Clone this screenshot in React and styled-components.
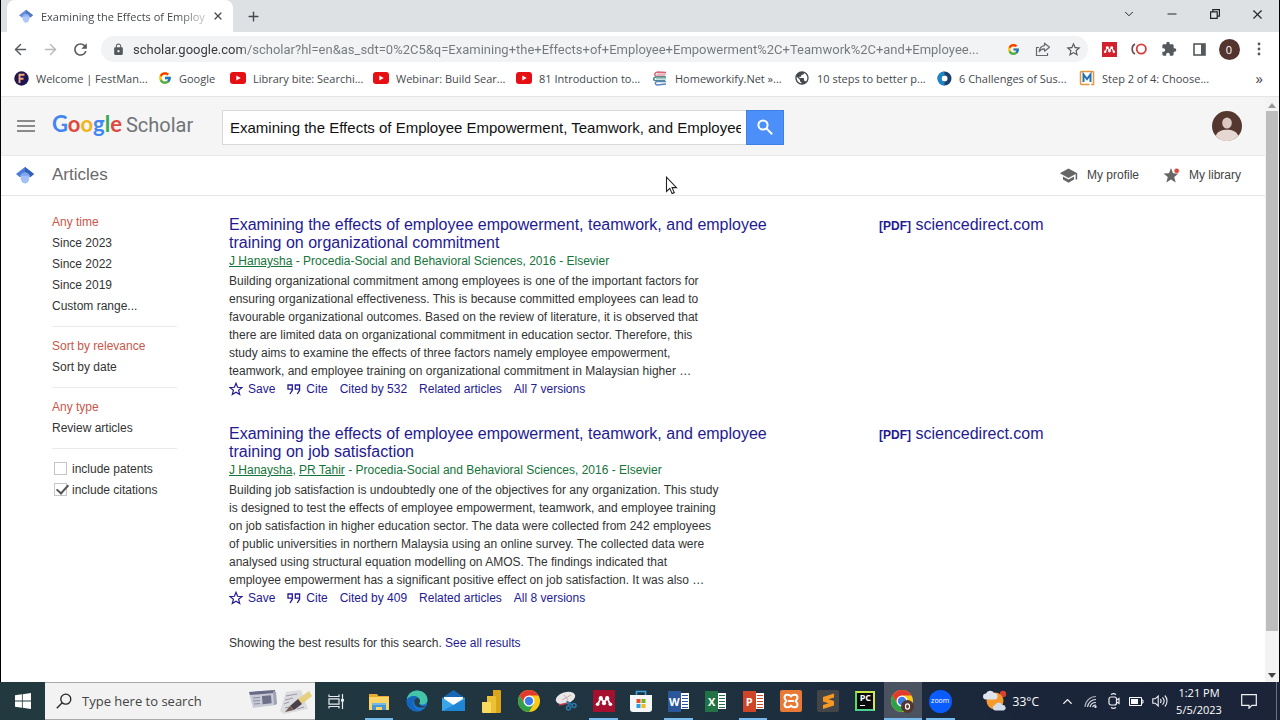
import React from "react";
import styled, { createGlobalStyle } from "styled-components";
import { FcGoogle } from "react-icons/fc";
import { MdLock, MdRefresh, MdExtension, MdStarBorder, MdSchool, MdPublic } from "react-icons/md";
import { ArrowLeft, ArrowRight, Plus, X, ChevronDown, ChevronUp, Minus } from "lucide-react";

const ui = '"Open Sans", "Noto Sans", sans-serif';
const arial = '"Liberation Sans", Arial, sans-serif';
const LINK = "#241a92";
const GREEN = "#14743a";

const GlobalStyle = createGlobalStyle`
  * { box-sizing: border-box; }
  body { margin: 0; background: #fff; }
  button, input { font: inherit; color: inherit; margin: 0; }
  button { border: 0; padding: 0; background: none; display: inline-flex; align-items: center; justify-content: center; }
  a { color: inherit; text-decoration: none; }
  svg { display: block; flex: none; }
`;

const Desktop = styled.div`
  min-height: 100vh;
  display: flex;
  flex-direction: column;
  font-family: ${arial};
  background: #fff;
`;

const Browser = styled.div`
  flex: 1;
  display: flex;
  flex-direction: column;
  border-left: 1px solid #000;
  border-right: 1px solid #000;
`;

/* Tab strip */

const TabStrip = styled.div`
  height: 32px;
  display: flex;
  align-items: center;
  padding-left: 6px;
  background: #dde1e4;
  font-family: ${ui};
  font-size: 11px;
  color: #45494d;
`;

const Tab = styled.div`
  width: 226px;
  height: 32px;
  display: flex;
  align-items: center;
  padding: 0 9px 0 12px;
  background: #fff;
  border-radius: 8px 8px 0 0;
`;

const TabTitle = styled.span`
  flex: 1;
  margin-left: 8px;
  white-space: nowrap;
  mask-image: linear-gradient(90deg, #000 80%, rgba(0, 0, 0, 0.35) 94%);
`;

const NewTab = styled.button`
  width: 28px;
  height: 28px;
  margin-left: 6px;
`;

const WindowButtons = styled.div`
  margin-left: auto;
  display: flex;
  padding-bottom: 4px;
  color: #222;
`;

const WindowButton = styled.button`
  width: 43px;
  height: 28px;
`;

/* Toolbar */

const Toolbar = styled.div`
  height: 34px;
  display: flex;
  align-items: center;
  padding: 0 5px 0 4px;
  color: #55595d;
  font-family: ${ui};
`;

const ToolButton = styled.button`
  width: 30px;
  height: 28px;
  color: ${(p) => (p.$dim ? "#b6b9bc" : "inherit")};
`;

const Omnibox = styled.label`
  flex: 1;
  min-width: 0;
  height: 26px;
  margin: 0 6px 0 6px;
  display: flex;
  align-items: center;
  padding-left: 11px;
  border-radius: 13px;
  background: #f1f3f4;
  font-family: Roboto, sans-serif;
  font-size: 13px;
`;

const UrlInput = styled.input`
  flex: 1;
  min-width: 0;
  height: 24px;
  border: 0;
  padding: 0;
  margin-left: 8px;
  outline: 0;
  background: linear-gradient(90deg, #34373a 109px, #74787c 109px);
  background-clip: text;
  -webkit-background-clip: text;
  -webkit-text-fill-color: transparent;
`;

const ProfileBadge = styled.span`
  width: 21px;
  height: 21px;
  border-radius: 50%;
  background: #54342f;
  color: #fff;
  font-size: 11px;
  line-height: 21px;
  text-align: center;
`;

const Bookmarks = styled.nav`
  height: 31px;
  display: flex;
  align-items: center;
  padding: 0 16px 6px 13px;
  border-bottom: 1px solid #e4e4e4;
  font-family: ${ui};
  font-size: 11px;
  color: #45494d;
`;

const Bookmark = styled.a`
  flex: 0 1 ${(p) => p.$width}px;
  min-width: 0;
  display: flex;
  align-items: center;
  gap: 7px;
  white-space: nowrap;
`;

const More = styled.button`
  margin-left: auto;
  font-size: 15px;
  line-height: 18px;
`;

/* Page */

const Viewport = styled.div`
  flex: 1;
  display: flex;
`;

const Page = styled.div`
  flex: 1;
  min-width: 0;
`;

const ScholarHeader = styled.header`
  height: 59px;
  display: flex;
  align-items: center;
  padding: 0 23px 0 15px;
  background: #f5f5f5;
  border-bottom: 1px solid #e8e8e8;
`;

const MenuButton = styled.button`
  width: 20px;
  height: 20px;
  color: #666;
`;

const Logo = styled.a`
  width: 170px;
  margin-left: 16px;
  margin-bottom: 3px;
  display: flex;
  align-items: baseline;
  gap: 4px;
  font-family: Lato, sans-serif;
  font-size: 22px;
  line-height: 28px;
`;

const Letter = styled.span`
  color: ${(p) => p.$color};
  font-weight: 700;
`;

const LogoWord = styled.span`
  font-family: Roboto, sans-serif;
  font-size: 20px;
  color: #707478;
`;

const SearchForm = styled.form`
  flex: 0 1 562px;
  min-width: 0;
  height: 35px;
  margin-top: 2px;
  display: flex;
`;

const SearchInput = styled.input`
  flex: 1;
  min-width: 0;
  border: 1px solid #d9d9d9;
  border-right: 0;
  padding: 1px 5px 0 7px;
  background: #fff;
  color: #111;
  font-size: 15px;
  outline: 0;
`;

const SearchButton = styled.button`
  width: 38px;
  background: #4d8ff8;
  border: 1px solid #3f7fe8;
`;

const Avatar = styled.button`
  margin-left: auto;
`;

const SubBar = styled.div`
  height: 40px;
  display: flex;
  align-items: center;
  padding: 0 24px 1px 15px;
  border-bottom: 1px solid #e5e5e5;
  color: #444;
  font-size: 12px;
`;

const SectionTitle = styled.h1`
  flex: 1;
  margin: 0 0 0 18px;
  font-size: 17px;
  line-height: 22px;
  font-weight: 400;
  color: #6a6a6a;
`;

const SubLink = styled.a`
  display: flex;
  align-items: center;
  gap: 9px;
  margin-left: 24px;
`;

const Content = styled.div`
  display: flex;
  padding: 16px 16px 24px 51px;
`;

const Sidebar = styled.aside`
  width: 125px;
  margin-right: 52px;
  font-size: 12px;
  color: #333;
`;

const FilterGroup = styled.div`
  display: flex;
  flex-direction: column;
  & + & {
    margin-top: 9px;
    padding-top: 9px;
    border-top: 1px solid #ebebeb;
  }
`;

const Filter = styled.a`
  line-height: 21px;
  color: ${(p) => (p.$active ? "#c9564a" : "inherit")};
`;

const CheckRow = styled.label`
  height: 21px;
  display: flex;
  align-items: center;
  gap: 5px;
  padding-left: 2px;
  white-space: nowrap;
`;

const Checkbox = styled.input`
  appearance: none;
  position: relative;
  width: 13px;
  height: 13px;
  border: 1px solid #c6c6c6;
  background: #fff;
  &:checked::after {
    content: "";
    position: absolute;
    left: 4px;
    top: -2px;
    width: 5px;
    height: 10px;
    border: solid #555;
    border-width: 0 2px 2px 0;
    transform: rotate(42deg);
  }
`;

const Results = styled.main`
  flex: 1;
  min-width: 0;
  padding-top: 4px;
  font-size: 12px;
  line-height: 18px;
  color: #333;
`;

const Result = styled.article`
  display: grid;
  grid-template-columns: minmax(0, 650px) auto;
  justify-content: start;
  margin-bottom: 27px;
`;

const ResultTitle = styled.h2`
  margin: 0;
  font-size: 16px;
  line-height: 18px;
  font-weight: 400;
  color: ${LINK};
`;

const Byline = styled.div`
  margin-bottom: 2px;
  color: ${GREEN};
`;

const Author = styled.a`
  text-decoration: underline;
`;

const Snippet = styled.div`
  white-space: nowrap;
`;

const Actions = styled.div`
  display: flex;
  gap: 12px;
  color: ${LINK};
`;

const Action = styled.a`
  display: flex;
  align-items: center;
  gap: 5px;
`;

const PdfLink = styled.a`
  font-size: 16px;
  color: ${LINK};
`;

const PdfTag = styled.b`
  font-size: 12px;
`;

const Note = styled.p`
  margin: 0;
`;

const NoteLink = styled.a`
  color: ${LINK};
`;

const Scrollbar = styled.div`
  width: 14px;
  display: flex;
  flex-direction: column;
  align-items: center;
  padding: 6px 0 4px;
  background: #f3f3f3;
`;

const Thumb = styled.div`
  flex: 1;
  width: 12px;
  margin: 3px 0 42px;
  background: #bdbdbd;
`;

const Pointer = styled.svg`
  position: absolute;
  left: 665px;
  top: 176px;
`;

/* Taskbar */

const Taskbar = styled.footer`
  height: 38px;
  display: flex;
  align-items: stretch;
  background: linear-gradient(90deg, #22393f, #1f3440 50%, #1a253a 80%, #1b2438);
  color: #fff;
  font-family: ${ui};
  font-size: 12px;
`;

const StartButton = styled.button`
  width: 45px;
`;

const TaskSearch = styled.label`
  width: 270px;
  display: flex;
  align-items: center;
  padding: 0 3px 0 11px;
  background: #f2f2f2;
  border: solid #aaa;
  border-width: 1px 0;
  color: #222;
`;

const TaskInput = styled.input`
  flex: 1;
  min-width: 0;
  margin-left: 10px;
  border: 0;
  padding: 0;
  background: none;
  font-size: 13px;
  outline: 0;
  &::placeholder { color: #444; opacity: 1; }
`;

const Apps = styled.div`
  flex: 0 1 641px;
  margin-left: 3px;
  display: flex;
`;

const AppButton = styled.button`
  flex: 1;
  border: solid transparent;
  border-width: 2px 0;
  background: ${(p) => (p.$active ? "#4b5360" : "none")};
  border-image: ${(p) =>
    p.$active
      ? "linear-gradient(90deg, #76b9ed, #76b9ed) 0 0 2 0"
      : p.$running
      ? "linear-gradient(90deg, transparent 12%, #76b9ed 12%, #76b9ed 88%, transparent 88%) 0 0 2 0"
      : "none"};
  &:first-child {
    margin-right: 5px;
  }
`;

const Tray = styled.div`
  margin-left: auto;
  display: flex;
  align-items: center;
`;

const Weather = styled.button`
  gap: 6px;
  margin-right: 17px;
`;

const TrayButton = styled.button`
  width: ${(p) => p.$width || 23}px;
  height: 30px;
`;

const Clock = styled.time`
  width: 46px;
  margin-left: 5px;
  font-size: 11px;
  line-height: 17px;
  text-align: center;
  white-space: nowrap;
`;

const ShowDesktop = styled.div`
  align-self: stretch;
  width: 4px;
  border-left: 1px solid #6b7480;
`;

/* Icons */

const ScholarIcon = ({ size = 18, soft }) => (
  <svg width={size} height={size} viewBox="0 0 18 18" aria-hidden="true" opacity={soft ? 0.85 : 1}>
    <path d="M9 1 0 8l3.600 3h10.800L18 8z" fill="#4b7bd8" />
    <path d="M9 1 18 8l-3.600 3L9 7z" fill="#3560b8" />
    <path d="M4.600 9.600c1-2 2.600-3 4.400-3s3.400 1 4.400 3c.5 3.500-1.100 8-4.400 8s-4.900-4.500-4.400-8z" fill="#a3bff6" />
    <path d="M4.200 9.700c1.200-2.400 2.800-3.200 4.800-3.200s3.600.8 4.800 3.200z" fill="#7ea4ee" />
  </svg>
);

const FestIcon = () => (
  <svg width="15" height="15" viewBox="0 0 15 15" aria-hidden="true">
    <circle cx="7.500" cy="7.500" r="7.200" fill="#1f1650" />
    <path d="M5.500 12V3.800h5M5.500 7.700h4" stroke="#f3a77d" strokeWidth="1.900" fill="none" />
  </svg>
);

const YouTubeIcon = () => (
  <svg width="16" height="12" viewBox="0 0 16 12" aria-hidden="true">
    <rect width="16" height="12" rx="3" fill="#e60f14" />
    <path d="M6.300 3.400v5.200L10.700 6z" fill="#fff" />
  </svg>
);

const BooksIcon = () => (
  <svg width="16" height="15" viewBox="0 0 16 15" fill="none" strokeWidth="1.500" aria-hidden="true">
    <path d="M14 1.500 6 1C2 1.500 2 4.500 4 5l9 .3" stroke="#d9657c" />
    <path d="M5 3.300 14 3" stroke="#e8a4b1" />
    <path d="M14 6 4 6C1 6.500 1 9 3 9.500l10 .2" stroke="#4a8c86" />
    <path d="M4 7.800h10" stroke="#9cc9c3" />
    <path d="M14 10.500 5 10.500c-2.500.5-2 3 0 3.500l9-1" stroke="#5a83c0" />
  </svg>
);

const RingIcon = () => (
  <svg width="15" height="15" viewBox="0 0 15 15" fill="none" strokeWidth="4" aria-hidden="true">
    <circle cx="7.500" cy="7.500" r="5" stroke="#1c3f6e" />
    <path d="M7.500 12.500a5 5 0 0 1 0-10" stroke="#1b86c8" />
  </svg>
);

const MIcon = () => (
  <svg width="16" height="16" viewBox="0 0 16 16" fill="none" aria-hidden="true">
    <path d="M4 1.500H2.500a1 1 0 0 0-1 1v11a1 1 0 0 0 1 1h8M12 14.500h2.500v-12a1 1 0 0 0-1-1H4" stroke="#e8953c" strokeWidth="1.500" />
    <path d="M4.500 12V4.500L8 9l3.500-4.500V12" stroke="#2272b4" strokeWidth="2" />
  </svg>
);

const ShareIcon = () => (
  <svg width="16" height="15" viewBox="0 0 16 15" fill="none" stroke="#666a6e" strokeWidth="1.200" aria-hidden="true">
    <path d="M4 5.500H1.500v8h11V11" />
    <path d="M9.500 1.200 14.500 5.200 9.500 9.200V6.800C7 6.700 5.200 7.600 4.200 9.800 4.400 6.500 6 4 9.500 3.600z" strokeLinejoin="round" />
  </svg>
);

const Mendeley = ({ size, bg }) => (
  <svg width={size} height={size} viewBox="0 0 22 22" aria-hidden="true">
    <rect width="22" height="22" fill={bg} />
    <path d="M4.500 14.200C6.500 13 6 10 7.800 8.300L11 12l3.200-3.700C16 10 15.500 13 17.500 14.200" stroke="#fff" strokeWidth="1.800" fill="none" />
    <circle cx="11" cy="13.200" r="2.100" fill="#fff" />
    <circle cx="4.600" cy="14.300" r="1.800" fill="#fff" />
    <circle cx="17.400" cy="14.300" r="1.800" fill="#fff" />
    <circle cx="7.800" cy="8.200" r="2.100" fill="#fff" />
    <circle cx="14.200" cy="8.200" r="2.100" fill="#fff" />
  </svg>
);

const CoIcon = () => (
  <svg width="16" height="12" viewBox="0 0 16 12" fill="none" strokeWidth="1.600" aria-hidden="true">
    <path d="M4 1C.2 3 .2 9 4 11" stroke="#6f4a4a" />
    <circle cx="10.300" cy="6" r="4.600" stroke="#d6403c" strokeWidth="1.800" />
  </svg>
);

const PanelIcon = () => (
  <svg width="13" height="13" viewBox="0 0 13 13" aria-hidden="true">
    <rect x="1" y="1" width="11" height="11" fill="none" stroke="#55595d" strokeWidth="1.600" />
    <path d="M8 1h4v11H8z" fill="#55595d" />
  </svg>
);

const DotsIcon = () => (
  <svg width="4" height="14" viewBox="0 0 4 14" fill="#55595d" aria-hidden="true">
    <circle cx="2" cy="2" r="1.400" /><circle cx="2" cy="7" r="1.400" /><circle cx="2" cy="12" r="1.400" />
  </svg>
);

const RestoreIcon = () => (
  <svg width="10" height="10" viewBox="0 0 10 10" fill="none" stroke="#222" strokeWidth="1.200" aria-hidden="true">
    <path d="M.6 2.800h6.600v6.600H.6zM2.800 2.600V.6h6.600v6.600h-2" />
  </svg>
);

const BurgerIcon = () => (
  <svg width="18" height="12" viewBox="0 0 18 12" stroke="#686868" strokeWidth="1.600" aria-hidden="true">
    <path d="M0 1h18M0 6h18M0 11h18" />
  </svg>
);

const LensIcon = ({ size, color, flip, stroke = 2 }) => (
  <svg width={size} height={size} viewBox="0 0 16 16" fill="none" stroke={color} strokeWidth={stroke} aria-hidden="true">
    {flip ? (
      <><circle cx="9.800" cy="6.200" r="5" /><path d="M6.200 9.800.8 15.200" /></>
    ) : (
      <><circle cx="6" cy="6" r="4.600" /><path d="m9.400 9.400 5.800 5.800" /></>
    )}
  </svg>
);

const AvatarIcon = () => (
  <svg width="30" height="30" viewBox="0 0 30 30" aria-hidden="true">
    <circle cx="15" cy="15" r="15" fill="#54382f" />
    <path d="M3.800 25C5 20.500 10 18.800 15 18.800s10 1.700 11.200 6.200A15 15 0 0 1 3.800 25z" fill="#e6d7d2" />
    <ellipse cx="15" cy="12" rx="4.800" ry="5.600" fill="#dcc8c2" />
  </svg>
);

const LibraryStar = () => (
  <svg width="17" height="16" viewBox="0 0 17 16" aria-hidden="true">
    <path d="m8 1 2 5.200 5.500.3-4.300 3.500L12.700 15.500 8 12.400 3.300 15.500 4.800 10 .5 6.500 6 6.200z" fill="#666" />
    <circle cx="13.700" cy="3.800" r="2.600" fill="#d9473c" stroke="#fff" strokeWidth=".5" />
  </svg>
);

const StarIcon = () => (
  <svg width="14" height="14" viewBox="0 0 14 14" fill="none" stroke={LINK} strokeWidth="1.200" aria-hidden="true">
    <path d="m7 1.300 1.600 4 4.300.3-3.300 2.700 1.100 4.200L7 10.200l-3.700 2.300 1.100-4.200L1.100 5.600l4.300-.3z" />
  </svg>
);

const QuoteIcon = () => (
  <svg width="14" height="11" viewBox="0 0 14 11" fill="none" stroke={LINK} strokeWidth="1.300" aria-hidden="true">
    <path d="M5.300 5.200H1V1h4.300v5.200L3 10M12.600 5.200H8.300V1h4.300v5.200L10.300 10" />
  </svg>
);

const WindowsIcon = () => (
  <svg width="16" height="16" viewBox="0 0 16 16" fill="#fff" aria-hidden="true">
    <path d="M0 2.300 6.900 1.300v6.300H0zM7.700 1.200 16 0v7.600H7.700zM0 8.400h6.900v6.300L0 13.700zM7.700 8.400H16V16l-8.300-1.200z" />
  </svg>
);

const NewsArt = () => (
  <svg width="63" height="28" viewBox="0 0 63 28" aria-hidden="true">
    <path d="m0 5 26-2 1 15-23 3z" fill="#c8cad6" />
    <path d="m0 5 26-2v3L1 8z" fill="#696b86" />
    <path d="m13 9 9-.7.600 8-9 1z" fill="#6d7088" />
    <path d="m4 11 7-.5M4 14l7-.5M5 17l6-.5" stroke="#8a8ca0" />
    <path d="m24 4 3 1 1 12-3 1z" fill="#9fa1b4" />
    <path d="m37 5 15-2 7 19-24 5-4-3z" fill="#dcdce0" />
    <path d="m37 9 11-2M36 13l8-2M35 17l5-2M36 21l4-1M48 22l7-2" stroke="#9a9aa6" />
    <path d="M49 12 60 4l3 5-10 8z" fill="#e6cf7f" />
    <path d="m41 19 8-7 4 5-8 6z" fill="#4a4148" />
    <path d="m36 25 5-6 4 4z" fill="#6e5a50" />
  </svg>
);

const TaskViewIcon = () => (
  <svg width="17" height="15" viewBox="0 0 17 15" fill="none" stroke="#e8ecee" strokeWidth="1.200" aria-hidden="true">
    <path d="M1 .5V2.500h10V.5M1 14.500v-2h10v2M1 4.800h10v5.400H1zM14.500 0v15" />
    <path d="M13 5h3v2.500h-3z" fill="#e8ecee" stroke="none" />
  </svg>
);

const ExplorerIcon = () => (
  <svg width="22" height="19" viewBox="0 0 22 19" aria-hidden="true">
    <path d="M1 2h8l1.500 2H21v14H1z" fill="#e9a936" />
    <path d="M1 5h20v13H1z" fill="#fad565" />
    <path d="M4 18v-7h14v7h-4v-3H8v3z" fill="#4597d8" />
    <path d="M4 11h14v2H4z" fill="#73b8e8" />
  </svg>
);

const EdgeIcon = () => (
  <svg width="22" height="22" viewBox="0 0 22 22" aria-hidden="true">
    <circle cx="11" cy="11" r="10.500" fill="#1b77d2" />
    <path d="M.8 10C1.500 4 6 .5 11 .5c6 0 10.500 4.300 10.500 9 0 3.500-2.500 5-5 5-2 0-3.500-.7-3.200-1.600 1-1.500.8-2.500.3-3.500C12 6.500 5 5.500.8 10z" fill="#43c6a8" />
    <path d="M.8 10C2.500 5.500 10 4.800 12.700 8c-3.500-.6-6 2-5.500 6 .5 3.500 3.500 6.500 8 6.500C8 23.500-.5 18 .8 10z" fill="#1565bd" />
    <path d="M13.300 12.900c1-1.500.8-2.500.3-3.500-1-1.600-3-1.700-4.500-.4-1.600 2-1.200 6.300 2.600 8 3 1.200 6.300.5 8.300-1-3 .5-7.400-.7-6.700-3.100z" fill="#24404e" />
  </svg>
);

const MailIcon = () => (
  <svg width="23" height="22" viewBox="0 0 23 22" aria-hidden="true">
    <path d="M0 8 11.500 0 23 8v13H0z" fill="#1767b3" />
    <path d="M2 7h19v8H2z" fill="#fff" />
    <path d="M0 7.500 11.500 15 23 7.500V21H0z" fill="#3aa6e8" />
    <path d="M0 21 23 9v12z" fill="#1e86d4" />
  </svg>
);

const PowerBiIcon = () => (
  <svg width="19" height="23" viewBox="0 0 19 23" aria-hidden="true">
    <path d="M11 0h7a1 1 0 0 1 1 1v21a1 1 0 0 1-1 1h-7z" fill="#dba51b" />
    <path d="M5 6h8a1 1 0 0 1 1 1v16H5z" fill="#edc136" />
    <path d="M0 12h8a1 1 0 0 1 1 1v10H1a1 1 0 0 1-1-1z" fill="#f8da61" />
  </svg>
);

const ChromeShape = () => (
  <>
    <circle cx="11" cy="11" r="11" fill="#fbc918" />
    <path d="M1.500 5.500a11 11 0 0 1 19 0H11L6.200 13.700z" fill="#e23b2e" />
    <path d="M1.500 5.500 6.200 13.700 11 16.500 15.800 13.800 11 22A11 11 0 0 1 1.500 5.500z" fill="#2ea04b" />
    <circle cx="11" cy="11" r="5.500" fill="#fff" />
    <circle cx="11" cy="11" r="4.200" fill="#3a7de8" />
  </>
);

const ChromeIcon = () => (
  <svg width="22" height="22" viewBox="0 0 22 22" aria-hidden="true"><ChromeShape /></svg>
);

const ChromeProfileIcon = () => (
  <svg width="23" height="23" viewBox="0 0 23 23" aria-hidden="true">
    <ChromeShape />
    <circle cx="16.500" cy="16.500" r="6.500" fill="#54382f" />
    <ellipse cx="16.500" cy="16.500" rx="2" ry="2.700" fill="none" stroke="#fff" strokeWidth="1.200" />
  </svg>
);

const SnipIcon = () => (
  <svg width="22" height="20" viewBox="0 0 22 20" aria-hidden="true">
    <ellipse cx="10.500" cy="7" rx="10" ry="5.800" fill="#e9e6e8" transform="rotate(-18 10.500 7)" />
    <path d="m7 9 9-5M9 4l4 5" stroke="#c9a9ae" strokeWidth="1" />
    <path d="m4 14 9-2" stroke="#c23f4c" strokeWidth="1.500" />
    <g fill="none" stroke="#2f76a8" strokeWidth="1.600">
      <circle cx="13.500" cy="17" r="2" /><circle cx="19" cy="14.500" r="2" /><path d="m14 15-2-5M17 14l-4-3" />
    </g>
  </svg>
);

const StoreIcon = () => (
  <svg width="22" height="22" viewBox="0 0 22 22" aria-hidden="true">
    <path d="M6.500 6V1.500h9V6" fill="none" stroke="#3ba3df" strokeWidth="1.600" />
    <path d="M0 5h22v14a3 3 0 0 1-3 3H3a3 3 0 0 1-3-3z" fill="#f4f6f8" />
    <path d="M6.500 9h4v4h-4z" fill="#e2502d" /><path d="M11.500 9h4v4h-4z" fill="#72b327" />
    <path d="M6.500 14h4v4h-4z" fill="#2a9fe0" /><path d="M11.500 14h4v4h-4z" fill="#f5b81e" />
  </svg>
);

const OfficeBox = styled.span`
  width: 21px;
  height: 21px;
  display: flex;
  align-items: center;
`;

const OfficeLetter = styled.span`
  width: 13px;
  height: 21px;
  line-height: 21px;
  background: ${(p) => p.$color};
  color: #fff;
  font-size: 11px;
  font-weight: 700;
  text-align: center;
`;

const OfficePage = styled.span`
  width: 8px;
  height: 16px;
  border: 1px solid #fff;
  background: ${(p) => `repeating-linear-gradient(#fff 0 1px, ${p.$color} 1px 2px, #fff 2px 3px)`};
`;

const Office = ({ letter, color }) => (
  <OfficeBox>
    <OfficeLetter $color={color}>{letter}</OfficeLetter>
    <OfficePage $color={color} />
  </OfficeBox>
);

const XamppIcon = () => (
  <svg width="22" height="22" viewBox="0 0 22 22" fill="none" aria-hidden="true">
    <rect width="22" height="22" rx="2" fill="#e87a35" />
    <path d="M11 6.500C9.500 4 4.500 4 4.500 7.500c0 2 1.500 2.500 2 3.500-.5 1-2 1.500-2 3.500 0 3.500 5 3.500 6.500 1 1.500 2.500 6.500 2.500 6.500-1 0-2-1.500-2.500-2-3.500.5-1 2-1.500 2-3.500 0-3.500-5-3.500-6.500-1z" stroke="#fff" strokeWidth="2" strokeLinejoin="round" />
    <path d="M8.800 11h4.400" stroke="#fff" strokeWidth="1.800" strokeLinecap="round" />
  </svg>
);

const SublimeIcon = () => (
  <svg width="22" height="22" viewBox="0 0 22 22" aria-hidden="true">
    <rect width="22" height="22" rx="2" fill="#434548" />
    <path d="m17 3.500-11 3.500v4.500l5.500 1.700L6 15v4l11-3.500V11l-5.500-1.700L17 7.500z" fill="#f89822" />
  </svg>
);

const PyCharmBox = styled.span`
  width: 20px;
  height: 20px;
  border: 2px solid;
  border-color: #c8e84e #d7e84b #4dcf8f #5fd95f;
  background: #0a0a0a;
  color: #fff;
  font-size: 9px;
  line-height: 10px;
  font-weight: 700;
  display: flex;
  flex-direction: column;
  align-items: center;
  &::after {
    content: "";
    width: 5px;
    height: 1px;
    margin: 2px 6px 0 0;
    background: #fff;
  }
`;

const ZoomBadge = styled.span`
  width: 23px;
  height: 23px;
  border-radius: 50%;
  background: #0b5cff;
  color: #fff;
  font-size: 7px;
  line-height: 21px;
  text-align: center;
`;

const WeatherIcon = () => (
  <svg width="24" height="22" viewBox="0 0 24 22" aria-hidden="true">
    <circle cx="20" cy="4" r="3.200" fill="#d8402f" />
    <circle cx="12" cy="11" r="8.500" fill="#f59a2c" />
    <path d="M3 9.500a3 3 0 0 1 0-6A4.500 4.500 0 0 1 11 3a3.300 3.300 0 0 1 1 6.500z" fill="#dde5ee" />
    <path d="M12 20.500a2.800 2.800 0 0 1 0-5.500 4 4 0 0 1 7.500 0 2.800 2.800 0 0 1 1 5.500z" fill="#d3dce8" />
  </svg>
);

const WifiIcon = () => (
  <svg width="13" height="13" viewBox="0 0 13 13" fill="none" stroke="#dfe3e8" strokeWidth="1.200" aria-hidden="true">
    <path d="M1 12A11 11 0 0 1 12 1.500" opacity=".7" />
    <path d="M3.500 12A8.500 8.500 0 0 1 12 4.500M6 12a6 6 0 0 1 6-4.500M8.500 12a3.500 3.500 0 0 1 3.500-2" />
    <circle cx="11.500" cy="11.800" r=".6" fill="#fff" />
  </svg>
);

const MeetIcon = () => (
  <svg width="12" height="16" viewBox="0 0 12 16" fill="none" stroke="#eceef1" strokeWidth="1.200" aria-hidden="true">
    <path d="M3 1.500C4.500.5 6.500.5 8 1.500M3 14.500c1.500 1 3.500 1 5 0" />
    <rect x="1" y="4" width="7.500" height="8" rx="2" />
    <path d="M8.500 7 11 5.500v5L8.500 9" />
  </svg>
);

const BatteryIcon = () => (
  <svg width="15" height="9" viewBox="0 0 15 9" fill="none" stroke="#fff" aria-hidden="true">
    <path d="M.5.5h12v8H.5zM12.500 3H14v3h-1.500" />
    <path d="M2 2h7v5H2z" fill="#fff" stroke="none" />
  </svg>
);

const VolumeIcon = () => (
  <svg width="16" height="14" viewBox="0 0 16 14" fill="none" stroke="#eef0f2" strokeWidth="1.100" aria-hidden="true">
    <path d="M.8 4.800h2.400L6.200 2v10L3.200 9.200H.8zM8.300 5c1 1.200 1 2.800 0 4M10.500 3.300c2 2.200 2 5.200 0 7.400M12.800 1.500c3 3.200 3 7.800 0 11" />
  </svg>
);

const NoticeIcon = () => (
  <svg width="16" height="15" viewBox="0 0 16 15" fill="none" stroke="#eef0f2" strokeWidth="1.200" aria-hidden="true">
    <path d="M.7.7h14.600v10.600h-4.300L8 14.200V11.300H.7z" />
  </svg>
);

const bookmarks = [
  { icon: <FestIcon />, text: "Welcome | FestMan...", width: 144 },
  { icon: <FcGoogle size={14} />, text: "Google", width: 72 },
  { icon: <YouTubeIcon />, text: "Library bite: Searchi...", width: 143 },
  { icon: <YouTubeIcon />, text: "Webinar: Build Sear...", width: 143 },
  { icon: <YouTubeIcon />, text: "81 Introduction to...", width: 136 },
  { icon: <BooksIcon />, text: "Homeworkify.Net »...", width: 142 },
  { icon: <MdPublic size={16} />, text: "10 steps to better p...", width: 143 },
  { icon: <RingIcon />, text: "6 Challenges of Sus...", width: 142 },
  { icon: <MIcon />, text: "Step 2 of 4: Choose...", width: 142 },
];

const results = [
  {
    title: ["Examining the effects of employee empowerment, teamwork, and employee", "training on organizational commitment"],
    authors: ["J Hanaysha"],
    source: " - Procedia-Social and Behavioral Sciences, 2016 - Elsevier",
    lines: [
      "Building organizational commitment among employees is one of the important factors for",
      "ensuring organizational effectiveness. This is because committed employees can lead to",
      "favourable organizational outcomes. Based on the review of literature, it is observed that",
      "there are limited data on organizational commitment in education sector. Therefore, this",
      "study aims to examine the effects of three factors namely employee empowerment,",
      "teamwork, and employee training on organizational commitment in Malaysian higher …",
    ],
    cited: 532,
    versions: 7,
  },
  {
    title: ["Examining the effects of employee empowerment, teamwork, and employee", "training on job satisfaction"],
    authors: ["J Hanaysha", "PR Tahir"],
    source: " - Procedia-Social and Behavioral Sciences, 2016 - Elsevier",
    lines: [
      "Building job satisfaction is undoubtedly one of the objectives for any organization. This study",
      "is designed to test the effects of employee empowerment, teamwork, and employee training",
      "on job satisfaction in higher education sector. The data were collected from 242 employees",
      "of public universities in northern Malaysia using an online survey. The collected data were",
      "analysed using structural equation modelling on AMOS. The findings indicated that",
      "employee empowerment has a significant positive effect on job satisfaction. It was also …",
    ],
    cited: 409,
    versions: 8,
  },
];

const apps = [
  { name: "Task view", icon: <TaskViewIcon /> },
  { name: "File Explorer", icon: <ExplorerIcon />, running: true },
  { name: "Edge", icon: <EdgeIcon /> },
  { name: "Mail", icon: <MailIcon /> },
  { name: "Power BI", icon: <PowerBiIcon /> },
  { name: "Chrome", icon: <ChromeIcon /> },
  { name: "Snipping Tool", icon: <SnipIcon /> },
  { name: "Mendeley", icon: <Mendeley size={22} bg="#a6102f" />, running: true },
  { name: "Store", icon: <StoreIcon /> },
  { name: "Word", icon: <Office letter="W" color="#2b579a" />, running: true },
  { name: "Excel", icon: <Office letter="X" color="#217346" /> },
  { name: "PowerPoint", icon: <Office letter="P" color="#cf4527" />, running: true },
  { name: "XAMPP", icon: <XamppIcon /> },
  { name: "Sublime Text", icon: <SublimeIcon /> },
  { name: "PyCharm", icon: <PyCharmBox>PC</PyCharmBox> },
  { name: "Chrome profile", icon: <ChromeProfileIcon />, active: true },
  { name: "Zoom", icon: <ZoomBadge>zoom</ZoomBadge>, running: true },
];

const brand = [["G", "#4285f4"], ["o", "#dd4b3e"], ["o", "#eeb51c"], ["g", "#4285f4"], ["l", "#34a853"], ["e", "#dd4b3e"]];

const withBreaks = (lines) =>
  lines.map((line, i) => (
    <React.Fragment key={line}>
      {i > 0 && <br />}
      {line}
    </React.Fragment>
  ));

export default function App() {
  return (
    <Desktop>
      <GlobalStyle />
      <Browser>
        <TabStrip>
          <Tab>
            <ScholarIcon size={14} soft />
            <TabTitle>Examining the Effects of Employ</TabTitle>
            <button aria-label="Close tab"><X size={12} strokeWidth={2.5} /></button>
          </Tab>
          <NewTab aria-label="New tab"><Plus size={15} strokeWidth={2.2} /></NewTab>
          <WindowButtons>
            <WindowButton aria-label="Search tabs"><ChevronDown size={14} strokeWidth={1.7} /></WindowButton>
            <WindowButton aria-label="Minimize"><Minus size={14} strokeWidth={1.7} /></WindowButton>
            <WindowButton aria-label="Restore"><RestoreIcon /></WindowButton>
            <WindowButton aria-label="Close"><X size={15} strokeWidth={1.7} /></WindowButton>
          </WindowButtons>
        </TabStrip>
        <Toolbar>
          <ToolButton aria-label="Back"><ArrowLeft size={17} /></ToolButton>
          <ToolButton aria-label="Forward" $dim><ArrowRight size={17} /></ToolButton>
          <ToolButton aria-label="Reload"><MdRefresh size={19} /></ToolButton>
          <Omnibox>
            <MdLock size={13} />
            <UrlInput
              aria-label="Address"
              defaultValue="scholar.google.com/scholar?hl=en&as_sdt=0%2C5&q=Examining+the+Effects+of+Employee+Empowerment%2C+Teamwork%2C+and+Employee..."
            />
            <ToolButton aria-label="Google"><FcGoogle size={13} /></ToolButton>
            <ToolButton aria-label="Share"><ShareIcon /></ToolButton>
            <ToolButton aria-label="Bookmark this page"><MdStarBorder size={17} /></ToolButton>
          </Omnibox>
          <ToolButton aria-label="Mendeley"><Mendeley size={15} bg="#d2222d" /></ToolButton>
          <ToolButton aria-label="Connector"><CoIcon /></ToolButton>
          <ToolButton aria-label="Extensions"><MdExtension size={16} /></ToolButton>
          <ToolButton aria-label="Side panel"><PanelIcon /></ToolButton>
          <ToolButton aria-label="Profile"><ProfileBadge>0</ProfileBadge></ToolButton>
          <ToolButton aria-label="Menu"><DotsIcon /></ToolButton>
        </Toolbar>
        <Bookmarks>
          {bookmarks.map((b) => (
            <Bookmark key={b.text} href="#" $width={b.width}>{b.icon}{b.text}</Bookmark>
          ))}
          <More aria-label="More bookmarks">»</More>
        </Bookmarks>

        <Viewport>
          <Page>
            <ScholarHeader>
              <MenuButton aria-label="Menu"><BurgerIcon /></MenuButton>
              <Logo href="#">
                <span>{brand.map(([ch, color], i) => <Letter key={i} $color={color}>{ch}</Letter>)}</span>
                <LogoWord>Scholar</LogoWord>
              </Logo>
              <SearchForm>
                <SearchInput
                  aria-label="Search"
                  defaultValue="Examining the Effects of Employee Empowerment, Teamwork, and Employee Training"
                />
                <SearchButton type="button" aria-label="Search"><LensIcon size={16} color="#fff" /></SearchButton>
              </SearchForm>
              <Avatar aria-label="Account"><AvatarIcon /></Avatar>
            </ScholarHeader>
            <SubBar>
              <ScholarIcon />
              <SectionTitle>Articles</SectionTitle>
              <SubLink href="#"><MdSchool size={19} color="#666" />My profile</SubLink>
              <SubLink href="#"><LibraryStar />My library</SubLink>
            </SubBar>
            <Content>
              <Sidebar>
                <FilterGroup>
                  <Filter href="#" $active>Any time</Filter>
                  <Filter href="#">Since 2023</Filter>
                  <Filter href="#">Since 2022</Filter>
                  <Filter href="#">Since 2019</Filter>
                  <Filter href="#">Custom range...</Filter>
                </FilterGroup>
                <FilterGroup>
                  <Filter href="#" $active>Sort by relevance</Filter>
                  <Filter href="#">Sort by date</Filter>
                </FilterGroup>
                <FilterGroup>
                  <Filter href="#" $active>Any type</Filter>
                  <Filter href="#">Review articles</Filter>
                </FilterGroup>
                <FilterGroup>
                  <CheckRow><Checkbox type="checkbox" />include patents</CheckRow>
                  <CheckRow><Checkbox type="checkbox" defaultChecked />include citations</CheckRow>
                </FilterGroup>
              </Sidebar>
              <Results>
                {results.map((r) => (
                  <Result key={r.cited}>
                    <div>
                      <ResultTitle><a href="#">{withBreaks(r.title)}</a></ResultTitle>
                      <Byline>
                        {r.authors.map((a, i) => (
                          <React.Fragment key={a}>{i > 0 && ", "}<Author href="#">{a}</Author></React.Fragment>
                        ))}
                        {r.source}
                      </Byline>
                      <Snippet>{withBreaks(r.lines)}</Snippet>
                      <Actions>
                        <Action href="#"><StarIcon />Save</Action>
                        <Action href="#"><QuoteIcon />Cite</Action>
                        <Action href="#">Cited by {r.cited}</Action>
                        <Action href="#">Related articles</Action>
                        <Action href="#">All {r.versions} versions</Action>
                      </Actions>
                    </div>
                    <PdfLink href="#"><PdfTag>[PDF]</PdfTag> sciencedirect.com</PdfLink>
                  </Result>
                ))}
                <Note>Showing the best results for this search. <NoteLink href="#">See all results</NoteLink></Note>
              </Results>
            </Content>
          </Page>
          <Scrollbar aria-hidden="true">
            <svg width="8" height="5" viewBox="0 0 8 5"><path d="M4 0 8 5H0z" fill="#999" /></svg>
            <Thumb />
            <svg width="8" height="5" viewBox="0 0 8 5"><path d="M4 5 8 0H0z" fill="#444" /></svg>
          </Scrollbar>
        </Viewport>
      </Browser>

      <Taskbar>
        <StartButton aria-label="Start"><WindowsIcon /></StartButton>
        <TaskSearch>
          <LensIcon size={16} color="#222" flip stroke={1.3} />
          <TaskInput aria-label="Search Windows" placeholder="Type here to search" />
          <NewsArt />
        </TaskSearch>
        <Apps>
          {apps.map((a) => (
            <AppButton key={a.name} aria-label={a.name} $running={a.running} $active={a.active}>{a.icon}</AppButton>
          ))}
        </Apps>
        <Tray>
          <Weather><WeatherIcon />33°C</Weather>
          <TrayButton aria-label="Hidden icons"><ChevronUp size={15} strokeWidth={2} /></TrayButton>
          <TrayButton aria-label="Network"><WifiIcon /></TrayButton>
          <TrayButton aria-label="Meet now"><MeetIcon /></TrayButton>
          <TrayButton aria-label="Battery"><BatteryIcon /></TrayButton>
          <TrayButton aria-label="Volume"><VolumeIcon /></TrayButton>
          <Clock>1:21 PM<br />5/5/2023</Clock>
          <TrayButton aria-label="Notifications" $width={54}><NoticeIcon /></TrayButton>
          <ShowDesktop />
        </Tray>
      </Taskbar>
      <Pointer width="13" height="19" viewBox="0 0 13 19" aria-hidden="true">
        <path d="M1.500 1.200v14.300l3.300-3.100 2.300 5.200 2.200-1-2.200-5h4.400z" fill="#fff" stroke="#222" strokeWidth="1.100" />
      </Pointer>
    </Desktop>
  );
}
